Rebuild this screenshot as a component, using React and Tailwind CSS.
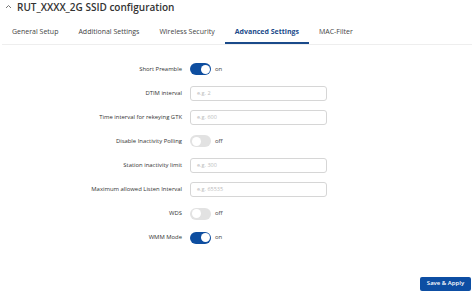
import React from 'react'

const tabs = ['General Setup', 'Additional Settings', 'Wireless Security', 'Advanced Settings', 'MAC-Filter']

const rows = [
  { label: 'Short Preamble', type: 'toggle', on: true },
  { label: 'DTIM interval', type: 'input', ph: 'e.g. 2' },
  { label: 'Time interval for rekeying GTK', type: 'input', ph: 'e.g. 600' },
  { label: 'Disable Inactivity Polling', type: 'toggle', on: false },
  { label: 'Station inactivity limit', type: 'input', ph: 'e.g. 300' },
  { label: 'Maximum allowed Listen Interval', type: 'input', ph: 'e.g. 65535' },
  { label: 'WDS', type: 'toggle', on: false },
  { label: 'WMM Mode', type: 'toggle', on: true }
]

const Toggle = ({ on }) => (
  <div className="flex items-center gap-[4px]">
    <div className={`w-[21px] h-[12px] rounded-full relative ${on ? 'bg-[#0e4ea0]' : 'bg-[#e2e2e2]'}`}>
      <div className={`absolute top-[1.5px] w-[9px] h-[9px] rounded-full bg-white ${on ? 'right-[1.5px]' : 'left-[1.5px]'}`} />
    </div>
    <span className="text-[6px] text-[#444]">{on ? 'on' : 'off'}</span>
  </div>
)

export default function App() {
  return (
    <div className="w-[474px] h-[294px] bg-white relative overflow-hidden" style={{ fontFamily: '"Open Sans", sans-serif' }}>
      <div className="flex items-center gap-[5px] pl-[5px] h-[13px]">
        <svg width="7" height="5" viewBox="0 0 7 5">
          <path d="M1 4 L3.5 1.5 L6 4" fill="none" stroke="#666" strokeWidth="0.9" />
        </svg>
        <span className="text-[10px] font-semibold text-[#333] leading-none">RUT_XXXX_2G SSID configuration</span>
      </div>

      <div className="mt-[13px] ml-[2px] flex border-b border-[#eeeeee] mr-[2px]">
        {tabs.map((t, i) => (
          <div
            key={i}
            className={`px-[10px] pt-[1px] pb-[5px] text-[7px] leading-[10px] ${t === 'Advanced Settings' ? 'font-bold text-[#1a4a8a] border-b-2 border-[#1a4a8a]' : 'text-[#444] border-b-2 border-transparent'}`}
          >
            {t}
          </div>
        ))}
      </div>

      <div className="flex flex-col gap-[10.1px] mt-[17px]">
        {rows.map((r, i) => (
          <div key={i} className="flex items-center h-[14px]">
            <div className="w-[182px] text-right text-[5.9px] text-[#333]">{r.label}</div>
            <div className="pl-[8px]">
              {r.type === 'toggle' ? (
                <Toggle on={r.on} />
              ) : (
                <div className="w-[137px] h-[15px] border border-[#d6d6d6] rounded-[3px] flex items-center pl-[6px] text-[5.5px] text-[#bbb]">
                  {r.ph}
                </div>
              )}
            </div>
          </div>
        ))}
      </div>

      <div className="absolute right-[3px] bottom-[3px]">
        <button className="w-[51px] h-[14px] bg-[#0d4ea3] text-white text-[6px] font-semibold rounded-[2px]">Save &amp; Apply</button>
      </div>
    </div>
  )
}
